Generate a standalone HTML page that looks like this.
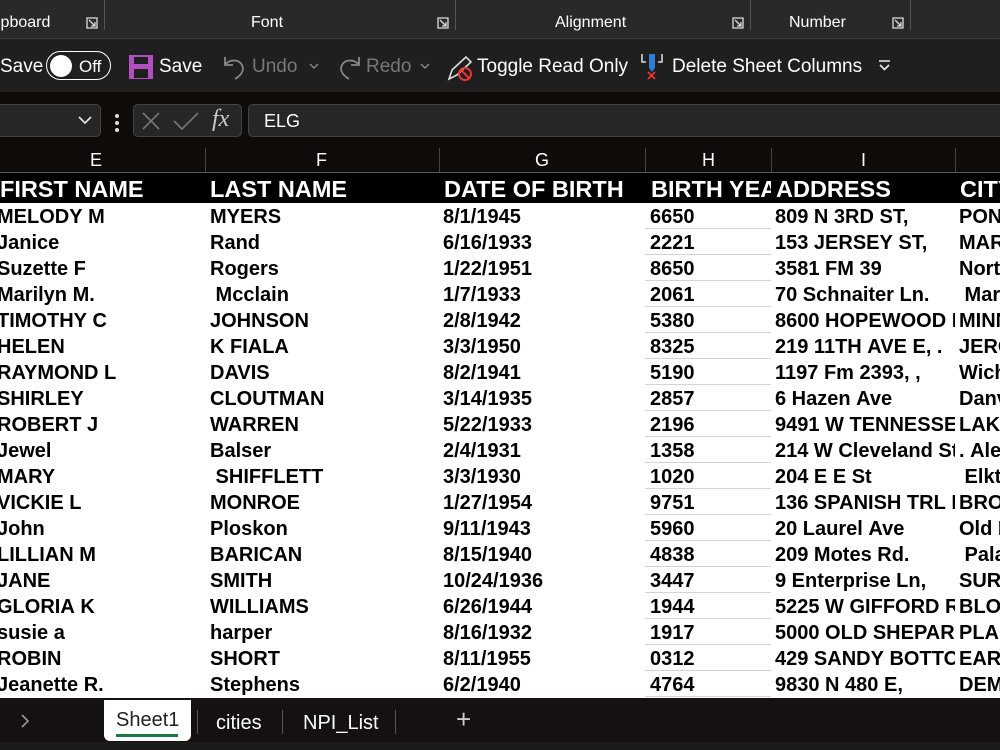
<!DOCTYPE html>
<html><head><style>
*{margin:0;padding:0;box-sizing:border-box}
body{width:1000px;height:750px;overflow:hidden;background:#0f0b09;font-family:"Liberation Sans",sans-serif;position:relative}
.a{position:absolute}
.ui{font-family:"Liberation Sans",sans-serif;color:#fff}
.cell{position:absolute;font-weight:bold;font-size:20px;color:#000;white-space:nowrap;overflow:hidden;line-height:26px}
.h{color:#fff;font-size:23.5px;line-height:30px}
</style></head><body>
<div class="a" style="left:0;top:0;width:1000px;height:38px;background:#292929"></div>
<div class="a ui" style="left:-3px;top:14px;font-size:16px">ipboard</div>
<div class="a ui" style="left:251px;top:14px;font-size:16px">Font</div>
<div class="a ui" style="left:555px;top:14px;font-size:16px">Alignment</div>
<div class="a ui" style="left:789px;top:14px;font-size:16px">Number</div>
<div class="a" style="left:104px;top:0;width:1px;height:30px;background:#555"></div>
<div class="a" style="left:455px;top:0;width:1px;height:30px;background:#555"></div>
<div class="a" style="left:750px;top:0;width:1px;height:30px;background:#555"></div>
<div class="a" style="left:910px;top:0;width:1px;height:30px;background:#555"></div>
<svg class="a" style="left:86px;top:17px" width="12" height="12" fill="none" stroke="#ddd" stroke-width="1.3"><path d="M1 1h10v10H1zM3 3l6 6M5 9h4V5"/></svg>
<svg class="a" style="left:437px;top:17px" width="12" height="12" fill="none" stroke="#ddd" stroke-width="1.3"><path d="M1 1h10v10H1zM3 3l6 6M5 9h4V5"/></svg>
<svg class="a" style="left:732px;top:17px" width="12" height="12" fill="none" stroke="#ddd" stroke-width="1.3"><path d="M1 1h10v10H1zM3 3l6 6M5 9h4V5"/></svg>
<svg class="a" style="left:892px;top:17px" width="12" height="12" fill="none" stroke="#ddd" stroke-width="1.3"><path d="M1 1h10v10H1zM3 3l6 6M5 9h4V5"/></svg>
<div class="a" style="left:0;top:38px;width:1000px;height:1px;background:#3a3a3a"></div>
<div class="a" style="left:0;top:39px;width:1000px;height:53px;background:#1f1f1f"></div>
<div class="a ui" style="left:0;top:56px;font-size:19px">Save</div>
<div class="a" style="left:46px;top:51px;width:65px;height:29px;border:1.5px solid #fff;border-radius:15px"></div>
<div class="a" style="left:50px;top:55px;width:22px;height:22px;background:#fff;border-radius:50%"></div>
<div class="a ui" style="left:79px;top:57px;font-size:17px">Off</div>
<svg class="a" style="left:128px;top:54px" width="26" height="26"><rect x="1" y="1" width="24" height="24" fill="#b04fc0"/><rect x="6" y="3" width="14" height="7" fill="#1f1f1f"/><rect x="6" y="15" width="14" height="9" fill="#1f1f1f"/></svg>
<div class="a ui" style="left:159px;top:56px;font-size:19px">Save</div>
<svg class="a" style="left:222px;top:54px" width="26" height="26" fill="none" stroke="#888" stroke-width="1.8"><path d="M3 3v8h8M3 11c4-6 14-6 17 0 3 6-2 11-7 14"/></svg>
<div class="a ui" style="left:252px;top:56px;font-size:19px;color:#777">Undo</div>
<svg class="a" style="left:309px;top:62px" width="10" height="8" fill="none" stroke="#888" stroke-width="1.4"><path d="M1 2l4 4 4-4"/></svg>
<svg class="a" style="left:336px;top:54px" width="26" height="26" fill="none" stroke="#888" stroke-width="1.8"><path d="M23 3v8h-8M23 11c-4-6-14-6-17 0-3 6 2 11 7 14"/></svg>
<div class="a ui" style="left:366px;top:56px;font-size:19px;color:#777">Redo</div>
<svg class="a" style="left:420px;top:62px" width="10" height="8" fill="none" stroke="#888" stroke-width="1.4"><path d="M1 2l4 4 4-4"/></svg>
<svg class="a" style="left:446px;top:54px" width="28" height="28" fill="none" stroke="#ddd" stroke-width="1.6"><path d="M3 25l3-9 14-13 5 5-14 13z"/><circle cx="19" cy="20" r="6" stroke="#e33" stroke-width="2"/><path d="M15 16l8 8" stroke="#e33" stroke-width="2"/></svg>
<div class="a ui" style="left:477px;top:56px;font-size:19px">Toggle Read Only</div>
<svg class="a" style="left:640px;top:52px" width="24" height="28"><path d="M2 2v8h4M22 2v8h-4" stroke="#ddd" fill="none" stroke-width="1.5"/><rect x="9" y="2" width="6" height="14" fill="#2a7fd4"/><path d="M9 16l3 4 3-4z" fill="#2a7fd4"/><path d="M8 20l7 7M15 20l-7 7" stroke="#e33" stroke-width="1.8"/></svg>
<div class="a ui" style="left:672px;top:56px;font-size:19px">Delete Sheet Columns</div>
<svg class="a" style="left:878px;top:59px" width="13" height="13" fill="none" stroke="#eee" stroke-width="1.6"><path d="M1 2h11M2 6l4.5 4.5L11 6"/></svg>
<div class="a" style="left:-10px;top:104px;width:111px;height:33px;background:#262626;border:1px solid #444;border-radius:5px"></div>
<svg class="a" style="left:77px;top:114px" width="16" height="12" fill="none" stroke="#ddd" stroke-width="1.8"><path d="M2 3l6 6 6-6"/></svg>
<div class="a" style="left:115px;top:114px;width:4px;height:4px;background:#ddd;border-radius:2px;box-shadow:0 7px 0 #ddd,0 14px 0 #ddd"></div>
<div class="a" style="left:133px;top:104px;width:109px;height:33px;background:#262626;border:1px solid #444;border-radius:5px"></div>
<svg class="a" style="left:140px;top:110px" width="22" height="22" stroke="#777" stroke-width="1.6"><path d="M3 3l16 16M19 3L3 19"/></svg>
<svg class="a" style="left:172px;top:110px" width="28" height="22" fill="none" stroke="#777" stroke-width="1.6"><path d="M2 11l8 8 16-16"/></svg>
<div class="a" style="left:212px;top:106px;font-family:'Liberation Serif',serif;font-style:italic;font-size:24px;color:#ccc">fx</div>
<div class="a" style="left:248px;top:104px;width:770px;height:33px;background:#262626;border:1px solid #444;border-radius:5px"></div>
<div class="a ui" style="left:264px;top:111px;font-size:18px">ELG</div>
<div class="a" style="left:0;top:172px;width:1000px;height:1px;background:#555"></div>
<div class="a" style="left:205px;top:148px;width:1px;height:24px;background:#444"></div>
<div class="a" style="left:439px;top:148px;width:1px;height:24px;background:#444"></div>
<div class="a" style="left:645px;top:148px;width:1px;height:24px;background:#444"></div>
<div class="a" style="left:771px;top:148px;width:1px;height:24px;background:#444"></div>
<div class="a" style="left:955px;top:148px;width:1px;height:24px;background:#444"></div>
<div class="a ui" style="left:90px;top:150px;font-size:18px">E</div>
<div class="a ui" style="left:316px;top:150px;font-size:18px">F</div>
<div class="a ui" style="left:535px;top:150px;font-size:18px">G</div>
<div class="a ui" style="left:702px;top:150px;font-size:18px">H</div>
<div class="a ui" style="left:861px;top:150px;font-size:18px">I</div>
<div class="a" style="left:0;top:173px;width:1000px;height:30px;background:#000"></div>
<div class="a" style="left:0;top:203px;width:1000px;height:497px;background:#fff"></div>
<div class="cell h" style="left:0;top:174px">FIRST NAME</div>
<div class="cell h" style="left:210px;top:174px">LAST NAME</div>
<div class="cell h" style="left:444px;top:174px">DATE OF BIRTH</div>
<div class="cell h" style="left:651px;top:174px;width:120px">BIRTH YEAR</div>
<div class="cell h" style="left:776px;top:174px">ADDRESS</div>
<div class="cell h" style="left:960px;top:174px">CITY</div>
<div id="rows"></div>
<script>
var d=[["MELODY M","MYERS","8/1/1945","6650","809 N 3RD ST,","PONCA"],
["Janice","Rand","6/16/1933","2221","153 JERSEY ST,","MARS"],
["Suzette F","Rogers","1/22/1951","8650","3581 FM 39","North"],
["Marilyn M."," Mcclain","1/7/1933","2061","70 Schnaiter Ln."," Mar"],
["TIMOTHY C","JOHNSON","2/8/1942","5380","8600 HOPEWOOD DR","MINN"],
["HELEN","K FIALA","3/3/1950","8325","219 11TH AVE E, .","JERO"],
["RAYMOND L","DAVIS","8/2/1941","5190","1197 Fm 2393, ,","Wich"],
["SHIRLEY","CLOUTMAN","3/14/1935","2857","6 Hazen Ave","Danv"],
["ROBERT J","WARREN","5/22/1933","2196","9491 W TENNESSEE","LAKE"],
["Jewel","Balser","2/4/1931","1358","214 W Cleveland St",". Ale"],
["MARY"," SHIFFLETT","3/3/1930","1020","204 E E St"," Elkt"],
["VICKIE L","MONROE","1/27/1954","9751","136 SPANISH TRL R","BRO"],
["John","Ploskon","9/11/1943","5960","20 Laurel Ave","Old B"],
["LILLIAN M","BARICAN","8/15/1940","4838","209 Motes Rd."," Pala"],
["JANE","SMITH","10/24/1936","3447","9 Enterprise Ln,","SURF"],
["GLORIA K","WILLIAMS","6/26/1944","1944","5225 W GIFFORD RD","BLOO"],
["susie a","harper","8/16/1932","1917","5000 OLD SHEPARD","PLAN"],
["ROBIN","SHORT","8/11/1955","0312","429 SANDY BOTTOM","EAR"],
["Jeanette R.","Stephens","6/2/1940","4764","9830 N 480 E,","DEM"]];
var x=[-3,210,443,650,775,959],w=[205,229,200,121,180,60],h="";
d.forEach(function(r,i){var t=204+i*26;
h+='<div class="a" style="left:645px;top:'+(t+24)+'px;width:126px;height:1px;background:#d4d4d4"></div>';
r.forEach(function(c,j){h+='<div class="cell" style="left:'+x[j]+'px;top:'+t+'px;width:'+w[j]+'px">'+c.replace(/ /g,'&nbsp;')+'</div>';});});
document.getElementById('rows').innerHTML=h;
</script>
<div class="a" style="left:0;top:698px;width:1000px;height:52px;background:#141110"></div>
<div class="a" style="left:0;top:742px;width:1000px;height:8px;background:#1b1b1b"></div>
<svg class="a" style="left:20px;top:713px" width="10" height="16" fill="none" stroke="#999" stroke-width="1.6"><path d="M2 2l6 6-6 6"/></svg>
<div class="a" style="left:104px;top:700px;width:87px;height:41px;background:#fff;border-radius:0 0 6px 6px"></div>
<div class="a ui" style="left:116px;top:709px;font-size:20px;color:#222">Sheet1</div>
<div class="a" style="left:116px;top:734px;width:62px;height:3px;background:#1a7a43"></div>
<div class="a" style="left:197px;top:710px;width:1px;height:24px;background:#555"></div>
<div class="a ui" style="left:216px;top:712px;font-size:20px">cities</div>
<div class="a" style="left:282px;top:710px;width:1px;height:24px;background:#555"></div>
<div class="a ui" style="left:303px;top:712px;font-size:20px">NPI_List</div>
<div class="a" style="left:395px;top:710px;width:1px;height:24px;background:#555"></div>
<div class="a ui" style="left:456px;top:704px;font-size:26px;color:#ccc">+</div>
</body></html>
